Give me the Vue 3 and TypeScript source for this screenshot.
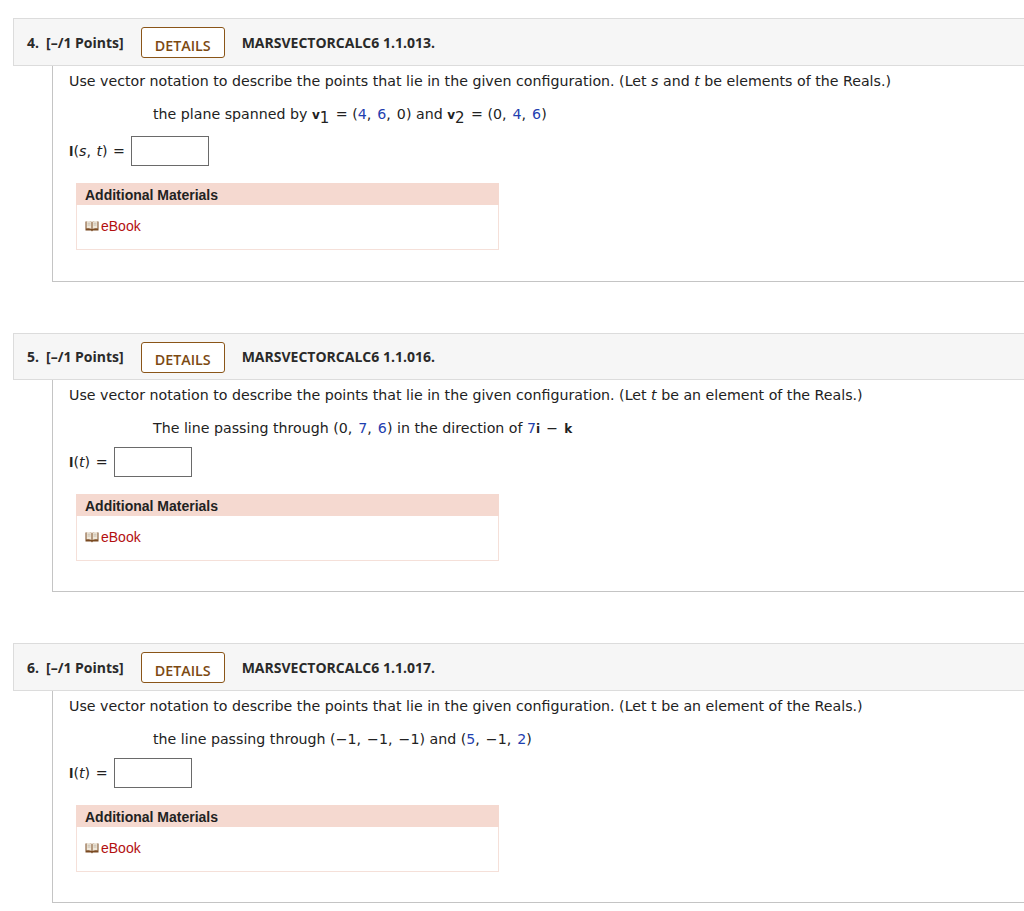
<script setup lang="ts">
interface Q { n: number; code: string }
const questions: Q[] = [
  { n: 4, code: '1.1.013.' },
  { n: 5, code: '1.1.016.' },
  { n: 6, code: '1.1.017.' }
]
</script>

<template>
  <div class="page">
    <section v-for="q in questions" :key="q.n" class="question" :class="'q' + q.n">
      <header class="head">
        <span class="num">{{ q.n }}.</span>
        <span class="pts">[–/1 Points]</span>
        <button class="details">DETAILS</button>
        <span class="code">MARSVECTORCALC6 {{ q.code }}</span>
      </header>
      <div class="body">
        <p class="line intro">
          <template v-if="q.n === 4">Use vector notation to describe the points that lie in the given configuration. (Let <i>s</i> and <i>t</i> be elements of the Reals.)</template>
          <template v-else-if="q.n === 5">Use vector notation to describe the points that lie in the given configuration. (Let <i>t</i> be an element of the Reals.)</template>
          <template v-else>Use vector notation to describe the points that lie in the given configuration. (Let t be an element of the Reals.)</template>
        </p>
        <p class="line given">
          <template v-if="q.n === 4">the plane spanned by <b class="vec">v</b><sub>1</sub> = <span class="tuple">(<span class="blue">4</span>, <span class="blue">6</span>, 0)</span> and <b class="vec">v</b><sub>2</sub> = <span class="tuple">(0, <span class="blue">4</span>, <span class="blue">6</span>)</span></template>
          <template v-else-if="q.n === 5">The line passing through <span class="tuple">(0, <span class="blue">7</span>, <span class="blue">6</span>)</span> in the direction of <span class="tuple"><span class="blue">7</span><b class="vec">i</b> − <b class="vec">k</b></span></template>
          <template v-else>the line passing through <span class="tuple">(−1, −1, −1)</span> and <span class="tuple">(<span class="blue">5</span>, −1, <span class="blue">2</span>)</span></template>
        </p>
        <div class="answer">
          <span class="label"><b class="ell">l</b>(<template v-if="q.n === 4"><i>s</i>, <i>t</i></template><i v-else>t</i>) =</span>
          <span class="box"></span>
        </div>
        <div class="materials">
          <div class="mat-title">Additional Materials</div>
          <div class="mat-body">
            <svg class="book" width="14" height="13" viewBox="0 0 14 13" aria-hidden="true">
              <path d="M0.5 1.5h5.6l0.9 0.8 0.9-0.8h5.6v9H7.9l-0.9 0.9-0.9-0.9H0.5z" fill="#7a4a22"/>
              <path d="M1.5 1.5c1.8-0.7 3.7-0.6 5 0.4v7c-1.3-0.7-3.2-0.9-5-0.4zM12.5 1.5c-1.8-0.7-3.7-0.6-5 0.4v7c1.3-0.7 3.2-0.9 5-0.4z" fill="#f0e8da"/>
              <path d="M2.5 3.2h3M2.5 5h3M8.5 3.2h3M8.5 5h3" stroke="#b5ab9c" stroke-width="0.7"/>
            </svg>
            <span class="ebook">eBook</span>
          </div>
        </div>
      </div>
    </section>
  </div>
</template>

<style>
html, body { margin: 0; background: #fff; }
</style>

<style scoped>
.page {
  width: 1024px;
  height: 911px;
  overflow: hidden;
  padding-top: 18px;
  box-sizing: border-box;
  font-family: "DejaVu Sans", Verdana, sans-serif;
  font-size: 14.2px;
  color: #222;
}
.question { margin: 0 0 51px 13px; }
.q5 .head { height: 47px; }
.q5 .body { height: 212px; }
.q6 .body { height: 212px; }
.head {
  height: 48px;
  box-sizing: border-box;
  background: #f6f6f6;
  border: 1px solid #dcdcdc;
  border-right: 0;
  display: flex;
  align-items: center;
  padding-left: 13px;
  font-family: "Open Sans", sans-serif;
  font-weight: 700;
  font-size: 14px;
  color: #2a2a2a;
}
.pts { margin-left: 7px; }
.details {
  width: 84px;
  height: 31px;
  margin: 1px 0 0 17px;
  padding: 5px 0 0;
  box-sizing: border-box;
  background: #fff;
  border: 1px solid #8a5518;
  border-radius: 3px;
  font-family: "Open Sans", sans-serif;
  font-weight: 600;
  font-size: 14.3px;
  color: #7c4a12;
}
.code { margin-left: 17px; font-weight: 700; }
.body {
  margin-left: 39px;
  height: 216px;
  box-sizing: border-box;
  border-left: 1px solid #c4c4c4;
  border-bottom: 1px solid #c4c4c4;
  padding-left: 16px;
}
.line { margin: 0; white-space: nowrap; line-height: 16px; }
.intro { padding-top: 7px; }
.given { padding: 17px 0 0 84px; }
.tuple { word-spacing: 1.5px; }
sub { font-size: 15px; line-height: 0; vertical-align: -4px; margin-right: 2px; }
.vec { font-size: 12px; }
.blue { color: #1f3fb0; }
.answer {
  display: flex;
  align-items: center;
  gap: 6px;
  margin-top: 10px;
  height: 30px;
}
.q4 .answer { margin-top: 13px; }
.q6 .answer { margin-top: 11px; }
.label { word-spacing: 1px; }
.ell { font-size: 13px; }
.box {
  width: 78px;
  height: 30px;
  box-sizing: border-box;
  border: 1px solid #6a6a6a;
  background: #fff;
}
.materials {
  width: 423px;
  margin: 17px 0 0 7px;
  border: 1px solid #f5e0d9;
  border-top: 0;
  box-sizing: border-box;
  height: 67px;
}
.mat-title {
  height: 22px;
  margin: 0 -1px 0;
  background: #f5d9d0;
  padding-left: 9px;
  font-family: "Liberation Sans", Arial, sans-serif;
  font-weight: 700;
  font-size: 14px;
  line-height: 24px;
  color: #222;
}
.mat-body {
  display: flex;
  align-items: center;
  padding: 11px 0 0 8px;
  font-family: "Liberation Sans", Arial, sans-serif;
  font-size: 14px;
  line-height: 20px;
}
.book { margin-right: 2px; }
.ebook { color: #b30f0f; }
</style>
